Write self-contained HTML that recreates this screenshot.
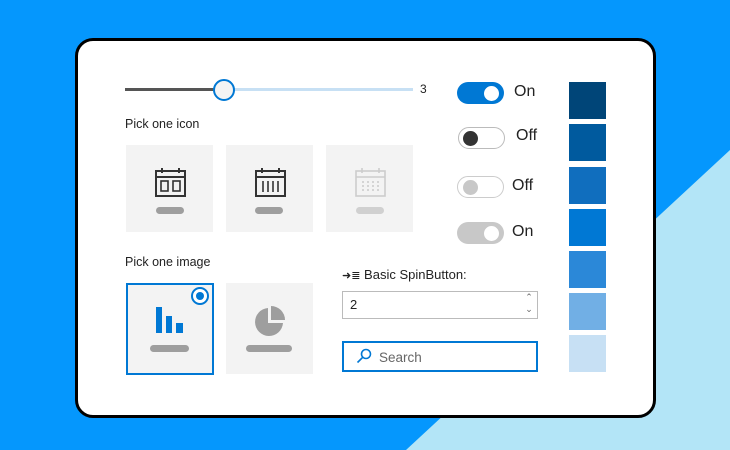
<!DOCTYPE html>
<html><head><meta charset="utf-8"><style>
*{margin:0;padding:0;box-sizing:border-box}
body{width:730px;height:450px;overflow:hidden;background:#0597fd;font-family:"Liberation Sans",Arial,sans-serif;position:relative;color:#222}
.abs{position:absolute}
.card{position:absolute;left:75px;top:38px;width:581px;height:380px;background:#fff;border:3px solid #000;border-radius:18px}
.tile{position:absolute;width:87px;height:87px;background:#f3f3f3}
.pill{position:absolute;height:7px;border-radius:4px;background:#9e9e9e}
.lbl{position:absolute;font-size:12.5px;color:#222}
.tog{position:absolute;width:47px;height:22px;border-radius:11px}
.knob{position:absolute;width:15px;height:15px;border-radius:50%;top:4px}
.tt{position:absolute;font-size:16px;color:#222}
.sw{position:absolute;left:569px;width:37px;height:37px}
</style></head><body>
<svg class="abs" style="left:0;top:0" width="730" height="450"><polygon points="730,150 730,450 406,450" fill="#b3e5f7"/></svg>
<div class="card"></div>
<!-- slider -->
<div class="abs" style="left:125px;top:88px;width:100px;height:3px;background:#555"></div>
<div class="abs" style="left:225px;top:88px;width:188px;height:3px;background:#c7e0f4"></div>
<div class="abs" style="left:213px;top:79px;width:22px;height:22px;border-radius:50%;border:2px solid #0078d4;background:#f4f4f4"></div>
<div class="lbl" style="left:420px;top:82px;font-size:12px">3</div>
<div class="lbl" style="left:125px;top:117px">Pick one icon</div>
<!-- icon tiles -->
<div class="tile" style="left:126px;top:145px"></div>
<div class="tile" style="left:226px;top:145px"></div>
<div class="tile" style="left:326px;top:145px"></div>
<svg class="abs" style="left:155px;top:167px" width="31" height="30" viewBox="0 0 31 30" fill="none" stroke="#333" stroke-width="2">
<rect x="1" y="4" width="29" height="25"/><line x1="1" y1="10" x2="30" y2="10"/><line x1="7" y1="1" x2="7" y2="6"/><line x1="24" y1="1" x2="24" y2="6"/>
<rect x="6" y="14" width="7" height="10" stroke-width="1.6"/><rect x="18" y="14" width="7" height="10" stroke-width="1.6"/></svg>
<svg class="abs" style="left:255px;top:167px" width="31" height="30" viewBox="0 0 31 30" fill="none" stroke="#333" stroke-width="2">
<rect x="1" y="4" width="29" height="25"/><line x1="1" y1="10" x2="30" y2="10"/><line x1="7" y1="1" x2="7" y2="6"/><line x1="24" y1="1" x2="24" y2="6"/>
<g stroke-width="1.6"><line x1="8" y1="14" x2="8" y2="25"/><line x1="13" y1="14" x2="13" y2="25"/><line x1="18" y1="14" x2="18" y2="25"/><line x1="23" y1="14" x2="23" y2="25"/></g></svg>
<svg class="abs" style="left:355px;top:167px" width="31" height="30" viewBox="0 0 31 30" fill="none" stroke="#ccc" stroke-width="1.6">
<rect x="1" y="4" width="29" height="25"/><line x1="1" y1="10" x2="30" y2="10"/><line x1="7" y1="1" x2="7" y2="6"/><line x1="24" y1="1" x2="24" y2="6"/>
<g stroke-dasharray="2 2"><line x1="8" y1="14" x2="8" y2="26"/><line x1="13" y1="14" x2="13" y2="26"/><line x1="18" y1="14" x2="18" y2="26"/><line x1="23" y1="14" x2="23" y2="26"/></g></svg>
<div class="pill" style="left:156px;top:207px;width:28px"></div>
<div class="pill" style="left:255px;top:207px;width:28px"></div>
<div class="pill" style="left:356px;top:207px;width:28px;background:#d0d0d0"></div>
<div class="lbl" style="left:125px;top:255px">Pick one image</div>
<!-- image tiles -->
<div class="tile" style="left:126px;top:283px;width:88px;height:92px;border:2px solid #0078d4"></div>
<div class="tile" style="left:226px;top:283px;height:91px"></div>
<div class="abs" style="left:191px;top:287px;width:18px;height:18px;border-radius:50%;border:2px solid #0078d4;background:#fff"></div>
<div class="abs" style="left:196px;top:292px;width:8px;height:8px;border-radius:50%;background:#0078d4"></div>
<div class="abs" style="left:156px;top:307px;width:6px;height:26px;background:#0078d4"></div>
<div class="abs" style="left:166px;top:316px;width:6px;height:17px;background:#0078d4"></div>
<div class="abs" style="left:176px;top:323px;width:7px;height:10px;background:#0078d4"></div>
<div class="pill" style="left:150px;top:345px;width:39px"></div>
<svg class="abs" style="left:253px;top:305px" width="34" height="34" viewBox="0 0 34 34"><path d="M15 3 A14 14 0 1 0 30 18 L15 18 Z" fill="#9e9e9e"/><path d="M18 1 A14 14 0 0 1 32 15 L18 15 Z" fill="#9e9e9e"/></svg>
<div class="pill" style="left:246px;top:345px;width:46px"></div>
<!-- spin -->
<div class="lbl" style="left:342px;top:267px;font-size:13px"><span style="font-size:11px">➜≣</span> Basic SpinButton:</div>
<div class="abs" style="left:342px;top:291px;width:196px;height:28px;border:1px solid #bbb;background:#fff"></div>
<div class="lbl" style="left:350px;top:297px;font-size:13px">2</div>
<div class="abs" style="left:523px;top:291px;font-size:9px;color:#666;line-height:12px;text-align:center;width:12px">⌃<br>⌄</div>
<div class="abs" style="left:342px;top:341px;width:196px;height:31px;border:2px solid #0078d4;background:#fff"></div>
<svg class="abs" style="left:356px;top:348px" width="16" height="16" viewBox="0 0 16 16" fill="none" stroke="#0078d4" stroke-width="1.6"><circle cx="10" cy="6" r="4.5"/><line x1="6.6" y1="9.4" x2="1.5" y2="14.5"/></svg>
<div class="lbl" style="left:379px;top:350px;font-size:13.5px;color:#666">Search</div>
<!-- toggles -->
<div class="tog" style="left:457px;top:82px;background:#0078d4"></div><div class="knob" style="left:484px;top:85.5px;background:#fff"></div>
<div class="tt" style="left:514px;top:83px">On</div>
<div class="tog" style="left:458px;top:127px;border:1.5px solid #bbb;background:#fff"></div><div class="knob" style="left:463px;top:131px;background:#333"></div>
<div class="tt" style="left:516px;top:127px">Off</div>
<div class="tog" style="left:457px;top:176px;border:1.5px solid #ccc;background:#fff"></div><div class="knob" style="left:463px;top:180px;background:#c8c8c8"></div>
<div class="tt" style="left:512px;top:177px">Off</div>
<div class="tog" style="left:457px;top:222px;background:#c8c8c8"></div><div class="knob" style="left:484px;top:225.5px;background:#fff"></div>
<div class="tt" style="left:512px;top:223px">On</div>
<!-- swatches -->
<div class="sw" style="top:82px;background:#004578"></div>
<div class="sw" style="top:124px;background:#005a9e"></div>
<div class="sw" style="top:167px;background:#106ebe"></div>
<div class="sw" style="top:209px;background:#0078d4"></div>
<div class="sw" style="top:251px;background:#2b88d8"></div>
<div class="sw" style="top:293px;background:#71afe5"></div>
<div class="sw" style="top:335px;background:#c7e0f4"></div>
</body></html>
